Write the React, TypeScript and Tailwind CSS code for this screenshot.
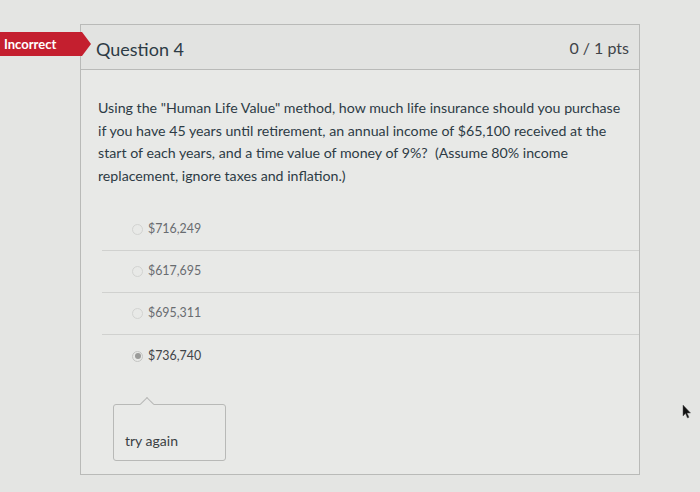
import React from 'react'

const options = [
  { label: '$716,249', selected: false },
  { label: '$617,695', selected: false },
  { label: '$695,311', selected: false },
  { label: '$736,740', selected: true },
]

export default function App() {
  return (
    <div
      className="relative w-[700px] h-[492px] overflow-hidden bg-[#e4e5e3] pt-[24px]"
      style={{ fontFamily: 'Lato, "Open Sans", sans-serif' }}
    >
      {/* Incorrect ribbon */}
      <div className="absolute left-0 top-[32px] h-[24px] w-[91px] bg-[#c41f2f] [clip-path:polygon(0_0,82px_0,91px_50%,82px_100%,0_100%)] flex items-center pl-[4px]">
        <span className="text-[13px] font-bold text-white leading-none">Incorrect</span>
      </div>

      <div className="ml-[80px] w-[560px] h-[451px] border border-[#b9bab8] bg-[#e8e9e7]">
        {/* header */}
        <div className="h-[45px] bg-[#e2e3e1] border-b border-[#b9bab8] flex items-center justify-between pl-[15px] pr-[10px]">
          <span className="text-[18px] text-[#2d3b45] pt-[4px]">Question 4</span>
          <span className="text-[16px] text-[#3f4448] pt-[2px]">0 / 1 pts</span>
        </div>

        {/* body */}
        <div className="pt-[27px] pl-[17px]">
          <p className="text-[14.2px] leading-[22.5px] text-[#2d3b45] whitespace-nowrap">
            Using the "Human Life Value" method, how much life insurance should you purchase
            <br />
            if you have 45 years until retirement, an annual income of $65,100 received at the
            <br />
            start of each years, and a time value of money of 9%?&nbsp; (Assume 80% income
            <br />
            replacement, ignore taxes and inflation.)
          </p>

          <div className="mt-[22px] ml-[4px]">
            {options.map((opt, i) => (
              <div
                key={opt.label}
                className={`h-[42px] flex items-center pl-[30px] gap-[5px] ${
                  i < options.length - 1 ? 'border-b border-[#d0d1cf]' : ''
                }`}
              >
                {opt.selected ? (
                  <span className="w-[11px] h-[11px] rounded-full border border-[#c4c5c3] flex items-center justify-center">
                    <span className="w-[6px] h-[6px] rounded-full bg-[#9a9b99]" />
                  </span>
                ) : (
                  <span className="w-[11px] h-[11px] rounded-full border border-[#d2d3d1]" />
                )}
                <span
                  className={`text-[12.4px] ${opt.selected ? 'text-[#3f4448]' : 'text-[#686c70]'}`}
                >
                  {opt.label}
                </span>
              </div>
            ))}
          </div>

          {/* comment bubble */}
          <div className="relative mt-[27px] ml-[15px] w-[113px] h-[57px] border border-[#b8b9b7] rounded-[3px] bg-[#e9eae8] pl-[11px] pt-[23px]">
            <span className="absolute -top-[6px] left-[28px] w-[10px] h-[10px] rotate-45 border-l border-t border-[#b8b9b7] bg-[#e9eae8]" />
            <span className="text-[14px] text-[#3a3f43]">try again</span>
          </div>
        </div>
      </div>

      {/* mouse cursor */}
      <svg className="absolute left-[682px] top-[404px]" width="10" height="15" viewBox="0 0 10 15">
        <path d="M1 1 L1 12 L3.5 9.5 L5.5 14 L7 13.3 L5 9 L8.5 9 Z" fill="#111" stroke="#555" strokeWidth="0.5" />
      </svg>
    </div>
  )
}
